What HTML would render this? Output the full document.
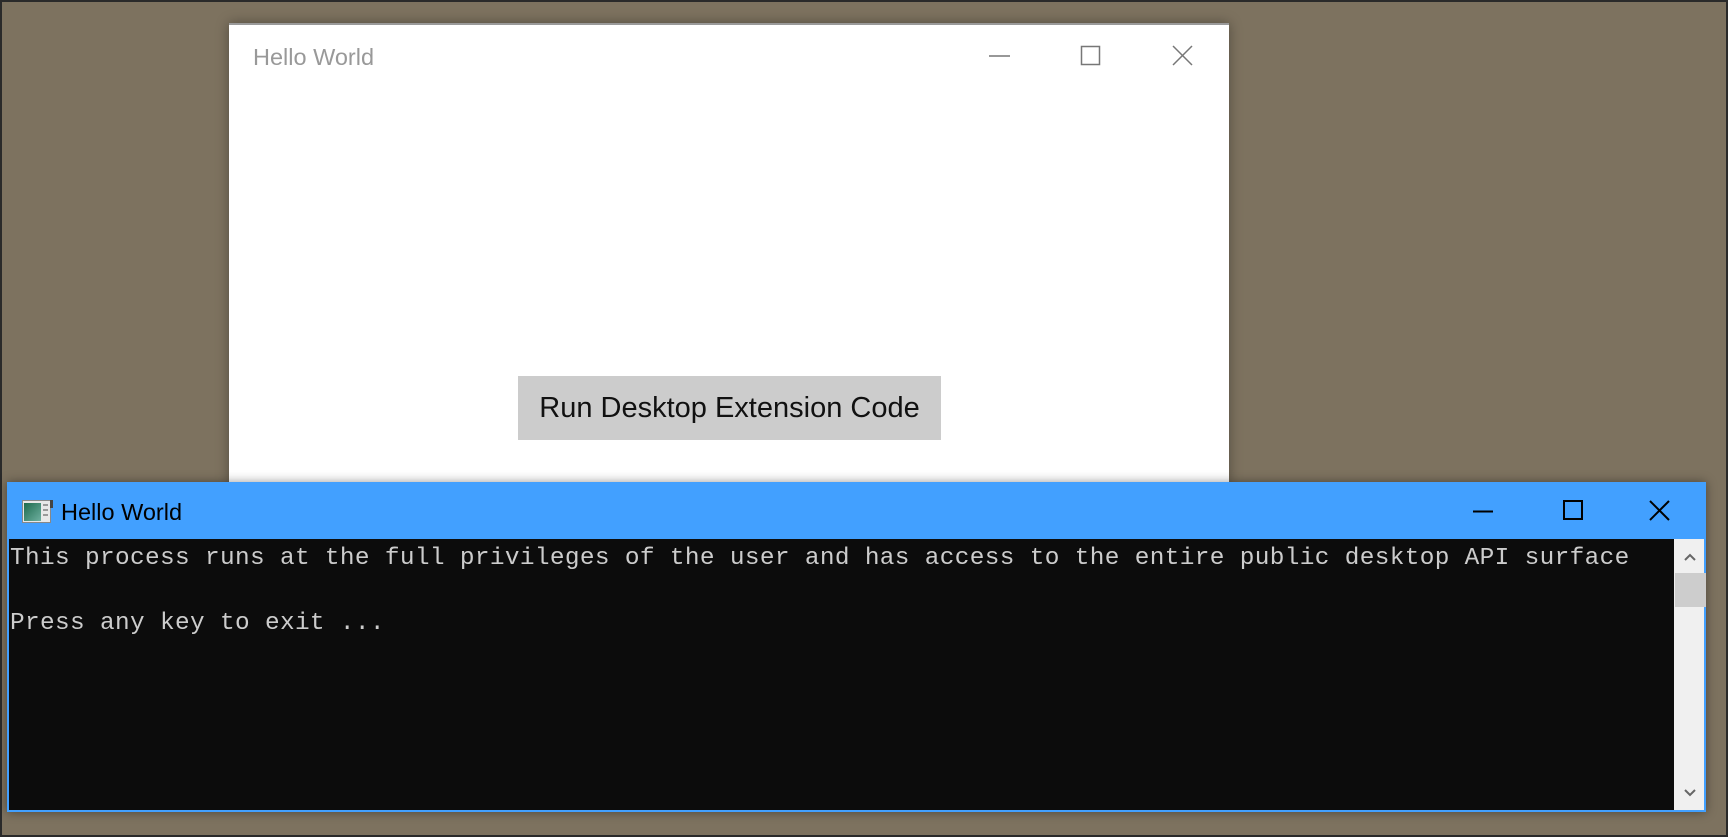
<!DOCTYPE html>
<html><head><style>
body{margin:0;width:1728px;height:837px;overflow:hidden;background:#7d725f;position:relative;font-family:"Segoe UI","Liberation Sans",sans-serif;}
.frame{position:absolute;left:0;top:0;width:1724px;height:833px;border:2px solid #2a2a2a;}
.uwp{position:absolute;left:229px;top:23px;width:1000px;height:460px;background:#fff;border-top:2px solid #9a9a9a;box-shadow:0 0 12px rgba(0,0,0,.35);}
.uwp .t{position:absolute;left:24px;top:19px;font-size:23.5px;color:#999;}
.btn{position:absolute;left:289px;top:351px;width:423px;height:64px;background:#ccc;color:#111;font-size:29px;line-height:64px;text-align:center;}
.con{position:absolute;left:7px;top:482px;width:1699px;height:330px;background:#42a0ff;box-shadow:0 0 10px rgba(0,0,0,.4);}
.con .t{position:absolute;left:54px;top:17px;font-size:23.5px;color:#000;}
.body{position:absolute;left:2px;top:57px;width:1665px;height:271px;background:#0c0c0c;}
pre{margin:0;position:absolute;left:1px;top:4px;font-family:"Liberation Mono","DejaVu Sans Mono",monospace;font-size:24.4px;letter-spacing:0.36px;line-height:32.5px;color:#cccccc;}
.sb{position:absolute;left:1667px;top:57px;width:30px;height:271px;background:#f0f0f0;}
.thumb{position:absolute;left:1px;top:34px;width:31px;height:34px;background:#cdcdcd;}
svg{position:absolute;}
</style></head><body>
<div class="frame"></div>
<div class="uwp">
<div class="t">Hello World</div>
<svg style="left:760px;top:15px" width="240" height="30" viewBox="0 0 240 30">
<line x1="0" y1="16" x2="21" y2="16" stroke="#777" stroke-width="1.5"/>
<rect x="92.5" y="6.5" width="18" height="18" fill="none" stroke="#777" stroke-width="1.5"/>
<line x1="184" y1="6" x2="203" y2="25" stroke="#777" stroke-width="1.5"/>
<line x1="203" y1="6" x2="184" y2="25" stroke="#777" stroke-width="1.5"/>
</svg>
<div class="btn">Run Desktop Extension Code</div>
</div>
<div class="con">
<svg style="left:15px;top:18px" width="32" height="24" viewBox="0 0 32 24">
<rect x="0.5" y="0.5" width="28" height="22" fill="#e8e8e8" stroke="#888"/>
<defs><linearGradient id="g" x1="0" y1="0" x2="1" y2="1"><stop offset="0" stop-color="#1d6b4e"/><stop offset="1" stop-color="#6fb0a0"/></linearGradient></defs>
<rect x="2" y="3" width="17" height="18" fill="url(#g)"/>
<rect x="21" y="4" width="5" height="2" fill="#999"/><rect x="21" y="9" width="5" height="2" fill="#999"/><rect x="21" y="14" width="5" height="2" fill="#999"/>
<rect x="28" y="0" width="3" height="8" fill="#444"/>
</svg>
<div class="t">Hello World</div>
<svg style="left:1450px;top:16px" width="240" height="30" viewBox="0 0 240 30">
<line x1="16" y1="13.5" x2="36" y2="13.5" stroke="#000" stroke-width="2"/>
<rect x="107" y="3" width="18" height="18" fill="none" stroke="#000" stroke-width="2"/>
<line x1="193" y1="3" x2="212" y2="22" stroke="#000" stroke-width="2"/>
<line x1="212" y1="3" x2="193" y2="22" stroke="#000" stroke-width="2"/>
</svg>
<div class="body"><pre>This process runs at the full privileges of the user and has access to the entire public desktop API surface

Press any key to exit ...</pre></div>
<div class="sb"><div class="thumb"></div>
<svg style="left:10px;top:14px" width="12" height="8"><polyline points="1,7 6,2 11,7" fill="none" stroke="#666" stroke-width="2"/></svg>
<svg style="left:10px;top:250px" width="12" height="8"><polyline points="1,1 6,6 11,1" fill="none" stroke="#666" stroke-width="2"/></svg>
</div>
</div>
</body></html>
